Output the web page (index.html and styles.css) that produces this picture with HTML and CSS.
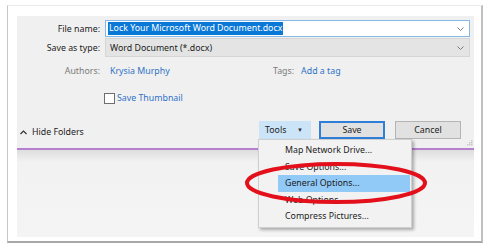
FILE: index.html
```html
<!DOCTYPE html>
<html lang="en">
<head>
<meta charset="utf-8">
<title>Save As</title>
<link rel="stylesheet" href="styles.css">
</head>
<body>
<div class="frame">
  <div class="panel">
    <div class="top">
      <div class="form">
        <label class="lbl">File name:</label>
        <div class="field field-name">
          <span class="sel">Lock Your Microsoft Word Document.docx</span>
          <svg class="chev" width="7" height="4" viewBox="0 0 7 4"><polyline points="0.5,0.5 3.5,3.5 6.5,0.5" fill="none" stroke="#7a7a7a" stroke-width="1"/></svg>
        </div>
        <label class="lbl lbl-type">Save as type:</label>
        <div class="field field-type">
          <span class="val">Word Document (*.docx)</span>
          <svg class="chev" width="7" height="4" viewBox="0 0 7 4"><polyline points="0.5,0.5 3.5,3.5 6.5,0.5" fill="none" stroke="#7a7a7a" stroke-width="1"/></svg>
        </div>
        <span class="lbl lbl-muted meta-row">Authors:</span>
        <div class="meta meta-row">
          <span class="meta-value link">Krysia Murphy</span>
          <span class="lbl-muted">Tags:</span>
          <span class="link tag">Add a tag</span>
        </div>
        <span class="spacer"></span>
        <label class="thumb">
          <span class="box"></span>
          <span class="link">Save Thumbnail</span>
        </label>
      </div>
      <div class="toolbar">
        <div class="hide">
          <svg width="7" height="5" viewBox="0 0 7 5"><polyline points="0.5,4 3.5,1 6.5,4" fill="none" stroke="#333" stroke-width="1.2"/></svg>
          <span>Hide Folders</span>
        </div>
        <div class="buttons">
          <div class="btn btn-tools"><span>Tools</span><span class="tri">▼</span></div>
          <div class="btn btn-save">Save</div>
          <div class="btn btn-cancel">Cancel</div>
        </div>
      </div>
      <svg class="grip" width="6" height="6" viewBox="0 0 6 6"><rect x="4" y="0" width="1.5" height="1.5" fill="#c8c8c8"/><rect x="2" y="2" width="1.5" height="1.5" fill="#c8c8c8"/><rect x="4" y="2" width="1.5" height="1.5" fill="#c8c8c8"/><rect x="0" y="4" width="1.5" height="1.5" fill="#c8c8c8"/><rect x="2" y="4" width="1.5" height="1.5" fill="#c8c8c8"/><rect x="4" y="4" width="1.5" height="1.5" fill="#c8c8c8"/></svg>
    </div>
    <div class="divider"></div>
    <div class="bottom"></div>

    <ul class="menu">
      <li>Map Network Drive...</li>
      <li>Save Options...</li>
      <li class="active">General Options...</li>
      <li>Web Options...</li>
      <li>Compress Pictures...</li>
    </ul>
  </div>
</div>
<svg class="circle" width="196" height="48" viewBox="0 0 196 48">
  <ellipse cx="96" cy="23" rx="89" ry="19" fill="none" stroke="#e3101b" stroke-width="4"/>
</svg>
</body>
</html>
```

FILE: styles.css
```css
* { box-sizing: border-box; }
html, body { margin: 0; padding: 0; background: #fff; }
body {
  position: relative;
  width: 490px;
  height: 252px;
  overflow: hidden;
  font-family: "Noto Sans", "Open Sans", sans-serif;
  font-size: 8.8px;
  color: #1b1b1b;
}
.frame {
  margin: 5px 0 0 7px;
  width: 476px;
  height: 238px;
  border-top: 1px solid #ececec;
  border-left: 1px solid #c6c6c6;
  border-right: 2px solid #c0c0c0;
  border-bottom: 2px solid #a8a8a8;
  padding: 10px 7px 4px 9px;
  background: #fff;
}
.panel {
  position: relative;
  height: 100%;
  display: flex;
  flex-direction: column;
}
.top {
  position: relative;
  height: 132px;
  background: #f0f0f0;
  display: flex;
  flex-direction: column;
  justify-content: space-between;
  padding: 4px 0 9px 0;
}
.form {
  display: grid;
  grid-template-columns: 83px 365px;
  column-gap: 5px;
  align-items: center;
}
.lbl { text-align: right; white-space: nowrap; }
.lbl-muted { color: #7b7b7b; }
.field {
  display: flex;
  align-items: center;
  justify-content: space-between;
  padding: 0 5px 0 2px;
}
.field-name {
  height: 17px;
  background: #fff;
  border: 1px solid #86b8e8;
}
.sel {
  background: #0a78d6;
  color: #fff;
  padding: 0 1px;
  line-height: 13px;
}
.field-type {
  height: 19px;
  margin-top: 1px;
  background: #e4e4e4;
  border: 1px solid #d6d6d6;
  padding-left: 4px;
}
.lbl-type { margin-top: 1px; }
.chev { flex: none; }
.meta-row { margin-top: 5px; height: 18px; line-height: 18px; }
.meta { display: flex; align-items: center; padding-left: 5px; }
.meta-value { width: 163px; }
.link { color: #2f72c6; }
.tag { margin-left: 7px; }
.thumb {
  display: flex;
  align-items: center;
  gap: 2px;
  margin-top: 11px;
  margin-left: -1px;
  height: 14px;
}
.box {
  width: 11px;
  height: 11px;
  border: 1px solid #6e6e6e;
  background: #fff;
}
.toolbar {
  display: flex;
  align-items: center;
  justify-content: space-between;
  padding: 0 13px 0 3px;
}
.hide {
  display: flex;
  align-items: center;
  gap: 5px;
  color: #222;
  margin-top: 4px;
}
.buttons { display: flex; align-items: center; }
.btn {
  height: 18px;
  display: flex;
  align-items: center;
  justify-content: center;
}
.btn-tools {
  width: 52px;
  background: #cce4f7;
  justify-content: space-between;
  padding: 0 8px 0 6px;
}
.tri { font-size: 6px; color: #333; }
.btn-save {
  width: 66px;
  margin-left: 8px;
  background: #e1e1e1;
  border: 2px solid #2f7fd8;
}
.btn-cancel {
  width: 66px;
  margin-left: 10px;
  background: #e1e1e1;
  border: 1px solid #b4b4b4;
}
.grip { position: absolute; right: 1px; bottom: 2px; }
.divider { height: 2px; background: #b67fd0; }
.bottom {
  flex: 1;
  background: linear-gradient(#dedede, #f2f2f2 12px, #f4f4f4);
}
.menu {
  position: absolute;
  left: 241px;
  top: 123px;
  width: 154px;
  margin: 0;
  padding: 2px 0;
  list-style: none;
  background: #f2f2f2;
  border: 1px solid #cfcfcf;
  box-shadow: 2px 2px 3px rgba(0,0,0,0.3);
}
.menu li {
  height: 16.5px;
  line-height: 16.5px;
  padding-left: 26px;
  white-space: nowrap;
}
.menu li.active {
  background: #91c9f7;
  margin-left: 19px;
  padding-left: 7px;
  margin-right: 1px;
}
.circle { position: absolute; left: 240px; top: 160px; }
```
